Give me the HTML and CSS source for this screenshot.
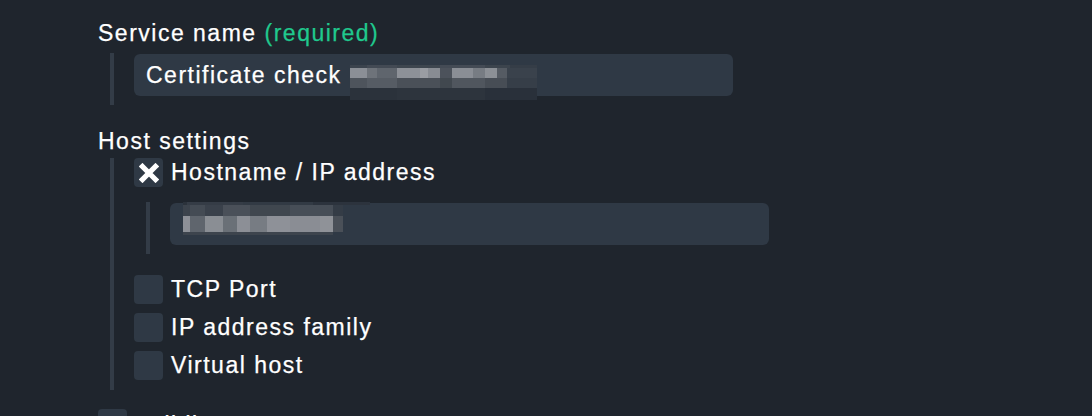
FILE: index.html
```html
<!DOCTYPE html>
<html lang="en">
<head>
<meta charset="utf-8">
<title>Certificate check</title>
<link rel="stylesheet" href="styles.css">
</head>
<body>
<div class="form">
  <div class="label label-first">Service name <span class="req">(required)</span></div>
  <div class="group group-service">
    <div class="input">
      <span class="input-text">Certificate check</span>
      <span class="mosaic mosaic-name">
        <span class="mrow m1a"></span>
        <span class="mrow m1b"></span>
        <span class="mrow m1c"></span>
        <span class="mrow m1d"></span>
      </span>
    </div>
  </div>

  <div class="label label-host">Host settings</div>
  <div class="group group-host">
    <div class="check-row">
      <span class="box checked">
        <svg viewBox="0 0 20 20" width="20" height="20" aria-hidden="true">
          <path d="M3.5 3.5 L16.5 16.5 M16.5 3.5 L3.5 16.5" stroke="#fff" stroke-width="5.2" stroke-linecap="square" fill="none"/>
        </svg>
      </span>
      <span class="check-label">Hostname / IP address</span>
    </div>
    <div class="group group-inner">
      <div class="input">
        <span class="mosaic mosaic-host">
          <span class="mrow m2a"></span>
          <span class="mrow m2b"></span>
          <span class="mrow m2c"></span>
          <span class="mrow m2d"></span>
        </span>
      </div>
    </div>
    <div class="check-row row-gap-large">
      <span class="box"></span>
      <span class="check-label">TCP Port</span>
    </div>
    <div class="check-row">
      <span class="box"></span>
      <span class="check-label">IP address family</span>
    </div>
    <div class="check-row">
      <span class="box"></span>
      <span class="check-label">Virtual host</span>
    </div>
  </div>

  <div class="check-row row-top">
    <span class="box"></span>
    <span class="check-label label-low">Validity</span>
  </div>
</div>
</body>
</html>
```

FILE: styles.css
```css
html, body {
  margin: 0;
  padding: 0;
  background: #1f252d;
  height: 100%;
  overflow: hidden;
}

body {
  font-family: "Liberation Sans", Arial, Helvetica, sans-serif;
  font-size: 23px;
  letter-spacing: 1.5px;
  color: #ffffff;
  -webkit-text-stroke: 0.25px currentColor;
}

.form {
  padding: 18px 0 0 98px;
  display: flex;
  flex-direction: column;
  align-items: flex-start;
}

.label {
  line-height: 30px;
  white-space: nowrap;
}

.label-host {
  margin-top: 21px;
}

.req {
  color: #1fc98e;
}

.group {
  margin-left: 12px;
  border-left: 4px solid #333c47;
  padding-left: 20px;
  display: flex;
  flex-direction: column;
  align-items: flex-start;
}

.group-service {
  margin-top: 5px;
  padding-top: 1px;
  padding-bottom: 9px;
}

.group-host {
  margin-top: 2px;
  padding-bottom: 10px;
}

.group-inner {
  margin-top: 15px;
  padding-top: 1px;
  padding-bottom: 9px;
}

.input {
  position: relative;
  width: 599px;
  height: 42px;
  box-sizing: border-box;
  background: #2f3945;
  border-radius: 6px;
  padding-left: 12px;
  display: flex;
  align-items: center;
  white-space: nowrap;
}

.input-text {
  line-height: 42px;
}

.check-row {
  display: flex;
  align-items: center;
  gap: 8px;
  height: 29px;
  margin-top: 9px;
  white-space: nowrap;
}

.group-host > .check-row:first-child {
  margin-top: 0;
}

.row-gap-large {
  margin-top: 21px !important;
}

.row-top {
  margin-top: 19px;
  align-items: flex-start;
}

.label-low {
  padding-top: 2px;
}

.box {
  width: 29px;
  height: 29px;
  flex: 0 0 29px;
  border-radius: 4px;
  background: #2f3945;
  display: flex;
  align-items: center;
  justify-content: center;
}

.box svg {
  display: block;
}

.check-label {
  line-height: 29px;
}

/* pixelated (blurred) redaction overlays */
.mosaic {
  position: absolute;
  display: flex;
  flex-direction: column;
}

.mrow {
  display: block;
}

.mosaic-name {
  left: 216px;
  top: 11px;
  width: 187px;
}

.m1a {
  height: 3px;
  background: linear-gradient(90deg,
    #3b434d 0 17px, #434a54 17px 47px, #3e464f 47px 90px,
    #444b55 90px 135px, #3c444d 135px 160px, #353d47 160px 187px);
}

.m1b {
  height: 10px;
  background: linear-gradient(90deg,
    #8b8f96 0 17px, #6e737a 17px 27px, #5f656d 27px 47px,
    #8d9198 47px 70px, #9a9da3 70px 78px, #888c93 78px 90px,
    #4c525b 90px 102px, #8a8e95 102px 123px, #777c83 123px 135px,
    #8c9096 135px 147px, #555b63 147px 157px, #3a424c 157px 187px);
}

.m1c {
  height: 10px;
  background: linear-gradient(90deg,
    #4e545c 0 17px, #565c64 17px 47px, #4a5058 47px 90px,
    #41484f 90px 102px, #50565e 102px 135px, #474d55 135px 157px,
    #363e48 157px 187px);
}

.m1d {
  height: 12px;
  background: linear-gradient(90deg,
    #2b323b 0 47px, #2d343d 47px 135px, #29303a 135px 187px);
}

.mosaic-host {
  left: 13px;
  top: -1px;
  width: 187px;
}

.m2a {
  height: 3px;
  background: linear-gradient(90deg,
    #2b323b 0 4px, #353c46 4px 60px, #323a44 60px 130px, #2c333d 130px 187px);
}

.m2b {
  height: 11px;
  background: linear-gradient(90deg,
    #3c434c 0 7px, #444b54 7px 22px, #3a414b 22px 40px,
    #4a5059 40px 67px, #40474f 67px 107px, #474e57 107px 150px,
    #343c46 150px 160px, #2f3945 160px 187px);
}

.m2c {
  height: 16px;
  background: linear-gradient(90deg,
    #8d9097 0 7px, #5f656d 7px 22px, #8a8e94 22px 40px,
    #6a7077 40px 54px, #8c8f96 54px 67px, #777c83 67px 84px,
    #8e9198 84px 107px, #8a8d94 107px 137px, #8f9298 137px 150px,
    #4a5058 150px 160px, #2f3945 160px 187px);
}

.m2d {
  height: 3px;
  background: linear-gradient(90deg,
    #3d444d 0 150px, #2f3945 150px 187px);
}
```
